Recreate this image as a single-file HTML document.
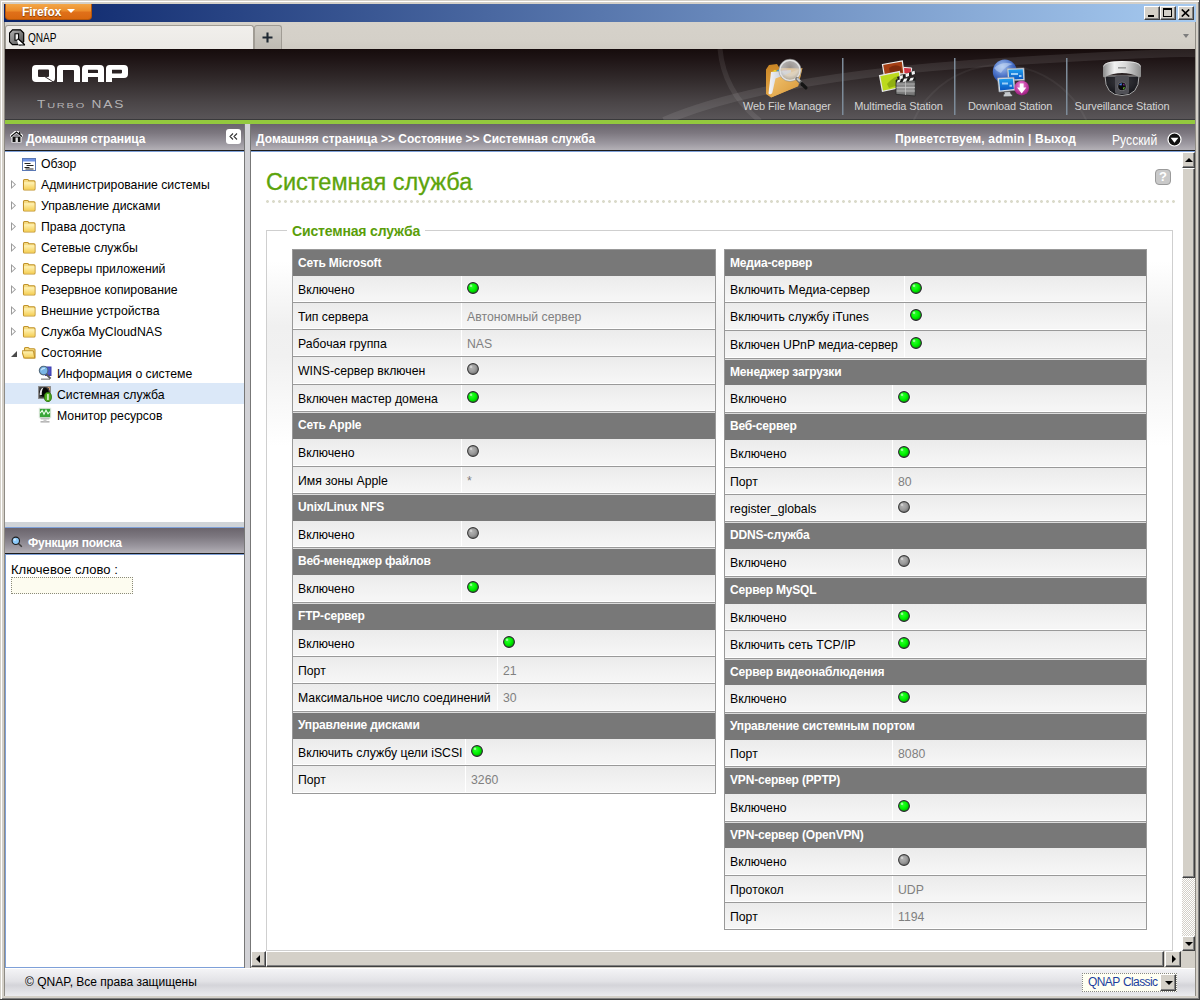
<!DOCTYPE html>
<html lang="ru">
<head>
<meta charset="utf-8">
<title>QNAP</title>
<style>
*{box-sizing:border-box;margin:0;padding:0}
html,body{width:1200px;height:1000px;overflow:hidden}
body{position:relative;background:#d4d0c8;font-family:"Liberation Sans",sans-serif;font-size:12px;color:#000}
.abs{position:absolute}
/* window frame */
#frame{left:0;top:0;width:1200px;height:1000px;background:#d4d0c8;border:1px solid #d4d0c8;box-shadow:inset 1px 1px 0 #fff,inset -1px -1px 0 #808080}
#frameR{left:1199px;top:0;width:1px;height:1000px;background:#404040}
#frameB{left:0;top:999px;width:1200px;height:1px;background:#404040}
#titlebar{left:4px;top:4px;width:1192px;height:18px;background:linear-gradient(90deg,#0a246a 0%,#a6caf0 100%)}
#ffbtn{left:5px;top:4px;width:87px;height:16px;border-radius:0 0 4px 4px;background:linear-gradient(180deg,#f3a748 0%,#ec8d2b 45%,#e0701a 55%,#d9680f 100%);border:1px solid #b4560c;border-top:none;color:#fff;font-weight:bold;font-size:12px;line-height:16px;padding-left:16px;letter-spacing:-0.1px;text-shadow:0 1px 1px rgba(90,40,0,.7)}
#ffbtn i{position:absolute;left:61px;top:5px;width:0;height:0;border-left:4px solid transparent;border-right:4px solid transparent;border-top:4.5px solid #fff}
.wbtn{top:6px;width:16px;height:14px;background:#d4d0c8;border:1px solid;border-color:#fff #404040 #404040 #fff;box-shadow:inset -1px -1px 0 #808080}
#tabbar{left:4px;top:22px;width:1192px;height:27px;background:linear-gradient(180deg,#d6d2ca 0%,#d4d0c8 70%,#cfcbc3 100%)}
#tab{left:5px;top:25px;width:249px;height:24px;background:linear-gradient(180deg,#f1efec 0%,#ebe9e5 100%);border:1px solid #a09c94;border-bottom:none;border-radius:3px 3px 0 0}
#tab span{position:absolute;left:22px;top:5px;font-size:12px;color:#000;transform-origin:0 0;transform:scaleX(.84)}
#newtab{left:254px;top:25px;width:28px;height:24px;background:linear-gradient(180deg,#cdcac3 0%,#bfbbb3 100%);border:1px solid #a09c94;border-bottom:none;border-radius:3px 3px 0 0}
/* page */
#page{left:5px;top:49px;width:1190px;height:947px;background:#fff;overflow:hidden}
#qhead{left:0;top:0;width:1190px;height:71px;background:linear-gradient(180deg,#160c0c 0%,#1f1516 15%,#332c2d 45%,#4a4547 75%,#5a5659 100%)}
#gline{left:0;top:70px;width:1190px;height:5px;background:#93c83e;border-top:1px solid #3a3a3c}
.phead{top:75px;height:27px;background:linear-gradient(180deg,#6a646c 0%,#7d7880 35%,#9c98a0 75%,#b4b1b7 100%);border-bottom:1px solid #1c1c1c;color:#fff;font-weight:bold;font-size:12px}
.ti{position:relative;height:21px;line-height:21px;white-space:nowrap;font-size:12.25px}
.ti .ic{position:absolute;left:17px;top:6px;width:14px;height:13px}
.ti span{position:absolute;left:36px;top:2px}
.ti .ar{position:absolute;left:6px;top:7px;width:5px;height:9px;background:#9a9a9a;clip-path:polygon(0 0,100% 50%,0 100%)}
.ti .ar:after{content:"";position:absolute;left:1px;top:2px;width:2.7px;height:5px;background:#fff;clip-path:polygon(0 0,100% 50%,0 100%)}
.ti .ao{position:absolute;left:6px;top:10px;width:6px;height:6px;background:#4a4a4a;clip-path:polygon(100% 0,100% 100%,0 100%)}
.ti .ic.fo{top:5px}
.ti.sub .ic{left:33px;top:3px;width:15px;height:16px}
.ti.sub span{left:52px}
.ti.sel{background:#dbe8f8}
.tb{border-left:1px solid #999;border-right:1px solid #999;background:#f3f3f3}
.tb .sh{position:absolute;left:0;right:0;background:#787878;border-top:1px solid #999;color:#fff;font-weight:bold;font-size:12px}
.tb .sh~.sh{border-top:1px solid #dcdcdc}
.tb .sh~.sh span{top:5px}
.tb .sh span{position:absolute;left:5px;top:6px;white-space:nowrap;letter-spacing:-0.18px;line-height:14px}

.tb .r{position:absolute;left:0;right:0;background:linear-gradient(180deg,#ebebeb 0%,#f0f0f0 40%,#f5f5f5 85%);border-bottom:1px solid #999;font-size:12.25px}
.tb .r:after{content:"";position:absolute;left:0;right:0;bottom:0;height:1px;background:#fff}
.tb .r>span{position:absolute;left:5px;top:7px;white-space:nowrap;line-height:14px}
.tb .r>i{position:absolute;top:0;bottom:0;width:1px;background:#fff;z-index:1}
.tb .r .v{position:absolute;top:0;bottom:0;right:0}
.tb .r .v em{position:absolute;left:5px;top:7px;font-style:normal;color:#808080;white-space:nowrap;line-height:14px}
.led{position:absolute;left:4px;top:5px;width:14px;height:14px}
.sbtn{background:#d4d0c8;border:1px solid;border-color:#fff #404040 #404040 #fff;box-shadow:inset -1px -1px 0 #808080}
.sbtn i{position:absolute;width:0;height:0}
.tu{left:2px;top:5px;border-left:4px solid transparent;border-right:4px solid transparent;border-bottom:4px solid #000}
.td{left:2px;top:5px;border-left:4px solid transparent;border-right:4px solid transparent;border-top:4px solid #000}
.tl{left:4px;top:3px;border-top:4px solid transparent;border-bottom:4px solid transparent;border-right:4px solid #000}
.tr{left:6px;top:3px;border-top:4px solid transparent;border-bottom:4px solid transparent;border-left:4px solid #000}
.hl{letter-spacing:-0.12px;font-size:11px;color:#d4d4d4;white-space:nowrap;text-align:center;line-height:13px}
</style>
</head>
<body>
<div id="frame" class="abs"></div>
<div id="frameR" class="abs"></div>
<div id="frameB" class="abs"></div>
<div id="titlebar" class="abs"></div>
<div id="ffbtn" class="abs">Firefox<i></i></div>
<div class="abs wbtn" style="left:1144px"><i class="abs" style="left:3px;top:8px;width:6px;height:2px;background:#000"></i></div>
<div class="abs wbtn" style="left:1160px"><i class="abs" style="left:2px;top:1px;width:9px;height:9px;border:1px solid #000;border-top-width:2px"></i></div>
<div class="abs wbtn" style="left:1178px"><svg class="abs" style="left:2px;top:2px" width="9" height="8" viewBox="0 0 9 8"><path d="M.8 .5 L8.2 7.5 M8.2 .5 L.8 7.5" stroke="#000" stroke-width="1.7"/></svg></div>
<div id="tabbar" class="abs"></div>
<div id="tab" class="abs"><svg class="abs" style="left:3px;top:3px" width="17" height="17" viewBox="0 0 17 17"><defs><linearGradient id="fv" x1="0" y1="0" x2="1" y2="1"><stop offset="0" stop-color="#b8b8b8"/><stop offset=".5" stop-color="#808080"/><stop offset="1" stop-color="#484848"/></linearGradient></defs><path d="M3.5 .8 H11.5 L14.7 4 V12.6 L11.6 15.7 H3.5 L.5 12.7 V4Z" fill="url(#fv)" stroke="#000" stroke-width="1.2"/><path d="M6 4.8 H9.6 V9.6 L7.6 11.2 H6Z" fill="#f4f4f4" stroke="#000" stroke-width="1.1"/><path d="M9 10 L15.8 16 H9.6 L8.2 12Z" fill="#fff"/><path d="M9.4 10 L15.8 15.8 M9.8 16 H16" stroke="#000" stroke-width="1.2" fill="none"/></svg><span>QNAP</span></div>
<div id="newtab" class="abs"><svg class="abs" style="left:7px;top:6px" width="11" height="11" viewBox="0 0 11 11"><path d="M5.5 .5 V10.5 M.5 5.5 H10.5" stroke="#1e2832" stroke-width="2.1"/></svg></div><i class="abs" style="left:1183px;top:34px;width:0;height:0;border-left:3.5px solid transparent;border-right:3.5px solid transparent;border-top:4px solid #7d7d7d"></i>
<svg width="0" height="0" style="position:absolute"><defs>
<linearGradient id="fg" x1="0" y1="0" x2="0" y2="1"><stop offset="0" stop-color="#fff3b8"/><stop offset="1" stop-color="#f5cf55"/></linearGradient>
<radialGradient id="lg" cx="0.4" cy="0.38" r="0.7"><stop offset="0" stop-color="#30ff30"/><stop offset="0.5" stop-color="#00f400"/><stop offset="1" stop-color="#009800"/></radialGradient>
<radialGradient id="lx" cx="0.4" cy="0.38" r="0.7"><stop offset="0" stop-color="#b4b4b4"/><stop offset="0.5" stop-color="#9c9c9c"/><stop offset="1" stop-color="#6a6a6a"/></radialGradient>
<symbol id="fold" viewBox="0 0 14 13"><path d="M1.5 2.5 Q1.5 1.5 2.5 1.5 H5.5 Q6.5 1.5 6.8 2.8 H12 Q13 2.8 13 3.8 V11 Q13 12 12 12 H2.5 Q1.5 12 1.5 11Z" fill="#f7dc82" stroke="#c0922a" stroke-width="1.1"/><rect x="2" y="4.3" width="10.5" height="7.2" fill="url(#fg)"/></symbol>
<symbol id="foldo" viewBox="0 0 14 13"><path d="M2.5 2.5 Q2.5 1.5 3.5 1.5 H6 Q7 1.5 7.3 2.8 H12 Q13 2.8 13 3.8 V11 Q13 12 12 12 H3.5 Q2.5 12 2.5 11Z" fill="#f7dc82" stroke="#c0922a" stroke-width="1.1"/><path d="M0 5.6 Q0 4.8 1 4.8 H10.6 Q11.4 4.8 11.6 5.6 L12.8 12 H2Z" fill="url(#fg)" stroke="#c0922a" stroke-width="1.1"/></symbol>
<symbol id="ledg" viewBox="0 0 14 14"><circle cx="7" cy="7" r="6.6" fill="#fff" opacity=".75"/><circle cx="7" cy="7" r="5.4" fill="url(#lg)" stroke="#2c2430" stroke-width="1.1"/><circle cx="5" cy="4.8" r="1.3" fill="#b8ffb8" opacity=".8"/></symbol>
<symbol id="ledx" viewBox="0 0 14 14"><circle cx="7" cy="7" r="6.6" fill="#fff" opacity=".75"/><circle cx="7" cy="7" r="5.4" fill="url(#lx)" stroke="#3a3a3a" stroke-width="1.1"/><circle cx="5" cy="4.8" r="1.3" fill="#e0e0e0" opacity=".7"/></symbol>
</defs></svg>
<div id="page" class="abs">
<div id="qhead" class="abs"></div>
<div id="gline" class="abs"></div>
<!--HEADER-->
<svg class="abs" style="left:0;top:0" width="1190" height="71" viewBox="5 49 1190 71">
<defs>
<linearGradient id="wf1" x1="0" y1="0" x2="1" y2="1"><stop offset="0" stop-color="#f3c877"/><stop offset="1" stop-color="#d79433"/></linearGradient>
<linearGradient id="wf2" x1="0" y1="0" x2="0" y2="1"><stop offset="0" stop-color="#c98524"/><stop offset="1" stop-color="#e4a84a"/></linearGradient>
<linearGradient id="pap" x1="0" y1="0" x2="1" y2="0"><stop offset="0" stop-color="#f4f6fa"/><stop offset="1" stop-color="#aeb4c0"/></linearGradient>
<radialGradient id="lens" cx=".5" cy=".35" r=".7"><stop offset="0" stop-color="#f2eee6" stop-opacity=".55"/><stop offset=".6" stop-color="#d8d8d8" stop-opacity=".8"/><stop offset="1" stop-color="#9a9a9a" stop-opacity=".85"/></radialGradient>
<linearGradient id="clap" x1="0" y1="0" x2="0" y2="1"><stop offset="0" stop-color="#5c5c5c"/><stop offset=".5" stop-color="#9a9a9a"/><stop offset="1" stop-color="#6a6a6a"/></linearGradient>
<radialGradient id="globe" cx=".4" cy=".3" r=".8"><stop offset="0" stop-color="#a9c4ee"/><stop offset=".5" stop-color="#4a72c8"/><stop offset="1" stop-color="#12308a"/></radialGradient>
<linearGradient id="scr" x1="0" y1="0" x2="0" y2="1"><stop offset="0" stop-color="#1f9ff0"/><stop offset="1" stop-color="#0a55c0"/></linearGradient>
<radialGradient id="mag" cx=".45" cy=".35" r=".7"><stop offset="0" stop-color="#f090d8"/><stop offset=".6" stop-color="#c03aa0"/><stop offset="1" stop-color="#8a1870"/></radialGradient>
<linearGradient id="silv" x1="0" y1="0" x2="1" y2="0"><stop offset="0" stop-color="#8a8a8a"/><stop offset=".3" stop-color="#f2f2f2"/><stop offset=".6" stop-color="#d8d8d8"/><stop offset="1" stop-color="#8c8c8c"/></linearGradient>
<radialGradient id="dome" cx=".5" cy=".3" r=".8"><stop offset="0" stop-color="#3a3a40"/><stop offset="1" stop-color="#0c0c10"/></radialGradient>
</defs>
<!-- swooshes -->
<path d="M664 121 Q770 76 1000 62 T1195 56" stroke="#fff" stroke-opacity=".09" stroke-width="8" fill="none"/>
<path d="M720 49 Q724 92 760 121" stroke="#fff" stroke-opacity=".08" stroke-width="5" fill="none"/>
<circle cx="1000" cy="160" r="95" stroke="#fff" stroke-opacity=".05" stroke-width="2" fill="none"/>
<!-- QNAP logo -->
<g transform="translate(32,65)" fill="#fff">
<path fill-rule="evenodd" d="M4 0 H19 Q23 0 23 4 V13 Q23 17 19 17 H4 Q0 17 0 13 V4 Q0 0 4 0Z M7 4.5 Q6 4.5 6 5.5 V11 Q6 12 7 12 H16 Q17 12 17 11 V5.5 Q17 4.5 16 4.5Z"/>
<path d="M11.5 10.8 L22 17.4" stroke="#3a3234" stroke-width="1" fill="none"/>
<path transform="translate(25,0)" d="M0 17 V3.5 Q0 0 3.5 0 H19 Q23 0 23 4 V17 H17 V5.8 Q17 5 16.2 5 H6 V17Z"/>
<path transform="translate(50,0)" fill-rule="evenodd" d="M0 17 V4 Q0 0 4 0 H18 Q22 0 22 4 V17 H16 V12 H6 V17Z M6 4.8 V8 H16 V5.6 Q16 4.8 15.2 4.8Z"/>
<path transform="translate(74,0)" fill-rule="evenodd" d="M0 17 V3.5 Q0 0 3.5 0 H18 Q22 0 22 4 V9 Q22 13 18 13 H6 V17Z M6 4.8 V8.4 H15.2 Q16 8.4 16 7.6 V5.6 Q16 4.8 15.2 4.8Z"/>
</g>
<!-- separators -->
<rect x="842" y="58" width="1.5" height="57" fill="#7d8b99"/>
<rect x="954" y="58" width="1.5" height="57" fill="#7d8b99"/>
<rect x="1066" y="58" width="1.5" height="57" fill="#7d8b99"/>
<!-- web file manager -->
<g transform="translate(755,54)">
<path d="M11 15.5 L14 11 L22 10 L24.5 14 L47 14.5 L43 32 L16 43.5 L11 40Z" fill="url(#wf2)"/>
<path d="M16 18 L23.5 17.2 L36 16 L36 30 L15 40.5 L13.5 39.5Z" fill="url(#pap)"/>
<path d="M17 17.8 L20 15.8 L22 17.3Z" fill="#f0e020"/><path d="M21 17.3 L23.5 15.6 L25.5 17Z" fill="#20a0e0"/><path d="M27 16.6 L31 15.4 L32 16.4Z" fill="#b070d0"/>
<path d="M20.5 24.5 L47.5 14 L43.2 32.2 L16.2 43.6Z" fill="url(#wf1)"/>
<circle cx="35" cy="16.3" r="10" fill="url(#lens)"/>
<circle cx="35" cy="16.3" r="10.2" fill="none" stroke="#e2e2e2" stroke-width="1.7"/>
<circle cx="35" cy="16.3" r="11.2" fill="none" stroke="#8a8a8a" stroke-width=".5"/>
<path d="M42 24.8 L50.5 33.5" stroke="#6a6a6a" stroke-width="3.4" stroke-linecap="round"/>
<path d="M47 30 L50.8 33.8" stroke="#141414" stroke-width="3.6" stroke-linecap="round"/>
<path d="M42 24.2 L45 27.2" stroke="#c8c8c8" stroke-width="2.2"/>
</g>
<!-- multimedia -->
<g transform="translate(865,54)">
<path d="M17.5 10.5 L37.3 7 L39 19.6 L19.3 21Z" fill="#a53f14" stroke="#eee" stroke-width="1.2"/>
<path d="M24 14 Q30 9 36 13 L37 18 L25 19.5Z" fill="#6e2408" opacity=".7"/>
<path d="M38.5 13.4 L46.7 14 L46 19.8 L39 19.8Z" fill="#d23444" stroke="#eee" stroke-width="1"/>
<path d="M14.6 21.6 L34.4 17.5 L36.2 33.3 L17.5 37.3Z" fill="#bcd91c" stroke="#e8e8e8" stroke-width="1.3"/>
<path d="M22 30 Q27 24 33 22 L34 31 L24 34Z" fill="#7a9a0a" opacity=".65"/>
<path d="M31 26 L50.2 26 L50.2 42 L31 40.3Z" fill="url(#clap)" stroke="#2a2a2a" stroke-width=".8"/>
<path d="M31.5 30 H50 M31.5 33.5 H50 M31.5 37 H50 M40.5 27 V41" stroke="#d0d0d0" stroke-width=".8" opacity=".8"/>
<path d="M31 25.8 L50.5 23.2 L50.5 26.3 L31 28.8Z" fill="#1a1a1a"/>
<path d="M33 25.6 L36 25.2 L34.5 28.3 L31.6 28.7Z M39 24.8 L42.5 24.3 L41 27.5 L37.6 27.9Z M45.5 23.9 L49 23.4 L47.6 26.6 L44 27.1Z" fill="#f4f4f4"/>
<path d="M32 23 L50 16.5 L51 19.6 L33 26Z" fill="#1a1a1a"/>
<path d="M34.5 22.1 L37.8 20.9 L37.8 24.3 L34.6 25.4Z M40.5 19.9 L44 18.7 L44 22 L40.8 23.2Z M46.5 17.8 L49.6 16.7 L50 19.9 L46.9 21Z" fill="#f4f4f4"/>
</g>
<!-- download -->
<g transform="translate(975,54)">
<circle cx="29.8" cy="17.5" r="12" fill="url(#globe)"/>
<path d="M19 14 Q27 7 38 10 Q30 12 26 19 Q22 18 19 14Z" fill="#c8daf4" opacity=".55"/>
<path d="M32 14.6 L49 14 L49.6 26.3 L33.3 26.8Z" fill="#d8dde2" stroke="#8e98a4" stroke-width=".6"/>
<path d="M33.4 15.8 L47.8 15.3 L48.3 25.1 L34.4 25.6Z" fill="url(#scr)"/>
<path d="M36 20 H43 M44 22 H46.5" stroke="#bfe4ff" stroke-width="2" opacity=".8"/>
<path d="M22.5 24 L39 23.3 L40.3 36.2 L24 38Z" fill="#dfe3e8" stroke="#8e98a4" stroke-width=".6"/>
<path d="M24 25.2 L37.8 24.6 L38.9 35 L25.2 36.5Z" fill="url(#scr)"/>
<path d="M27 29.5 H33 M34.5 31.7 H37" stroke="#bfe4ff" stroke-width="2" opacity=".8"/>
<path d="M29 38 L35 37.5 L36 40 L37.5 41 L37 42.6 L28.5 42.8 L28.2 41 L29.5 40Z" fill="#c4c8cc" stroke="#333" stroke-width=".5"/>
<circle cx="46.7" cy="34.1" r="7.4" fill="url(#mag)"/>
<path d="M44.8 29.5 H48.6 V33.5 H51.3 L46.7 39.5 L42.1 33.5 H44.8Z" fill="#fff"/>
</g>
<!-- surveillance -->
<g transform="translate(1087,54)">
<path d="M18 22 Q18 41.5 35 41.5 Q52 41.5 52 22Z" fill="url(#dome)" stroke="#a8a8a8" stroke-width="1"/>
<rect x="28" y="21.6" width="14" height="18.5" rx="2.5" fill="#505056"/>
<circle cx="35" cy="32.4" r="4.6" fill="#77777c"/>
<circle cx="35" cy="32.4" r="3.8" fill="#0a0a0c"/>
<path d="M32 31 Q33 29 35 29.4 L34.5 31.5Z" fill="#4a7ad8"/><path d="M36 29.5 Q37.5 30 38 31.3 L36.3 31.5Z" fill="#8a2a9a"/><path d="M38 33 Q37.6 35 36 35.7 L36 33.4Z" fill="#5aa82a"/>
<path d="M16 13 Q16 7 35 7 Q54 7 54 13 V22 Q54 24 52 23 Q44 19 35 19 Q26 19 18 23 Q16 24 16 22Z" fill="url(#silv)"/>
<path d="M16.5 12.5 Q17 7.5 35 7.5 Q53 7.5 53.5 12.5" stroke="#fff" stroke-width=".8" fill="none" opacity=".7"/>
<rect x="31" y="13" width="8" height="1.6" fill="#9a9a9a"/>
</g>
</svg>
<div class="abs hl" style="left:738px;top:51px;width:87px">Web File Manager</div>
<div class="abs hl" style="left:848px;top:51px;width:91px">Multimedia Station</div>
<div class="abs hl" style="left:963px;top:51px;width:84px">Download Station</div>
<div class="abs hl" style="left:1069px;top:51px;width:96px">Surveillance Station</div>
<div class="abs" style="left:32px;top:51px;white-space:nowrap;color:#b4b2b4;font-size:10px;line-height:10px;letter-spacing:1.3px;transform-origin:0 0;transform:scaleX(1.37)">T<span style="font-size:8px">URBO</span>&nbsp;NAS</div>
<!--/HEADER-->
<div id="lhead" class="abs phead" style="left:0;width:239px"><svg class="abs" style="left:5px;top:7px" width="13" height="12" viewBox="0 0 13 12"><path d="M0.5 5.5 L6.5 0.5 L12.5 5.5 M9.5 1 V3" stroke="#fff" stroke-width="3" fill="none"/><rect x="1.5" y="5" width="10" height="6.5" fill="#fff"/><path d="M1 5.5 L6.5 1 L12 5.5" stroke="#111" stroke-width="1.3" fill="none"/><rect x="2.5" y="5.5" width="8" height="5.5" fill="#111"/><rect x="5.5" y="6.5" width="2.4" height="4.5" fill="#ddd"/><rect x="9" y="1" width="1.5" height="2.5" fill="#111"/></svg><span class="abs" style="left:21px;top:8px;letter-spacing:-0.12px">Домашняя страница</span><div class="abs" style="left:221px;top:5px;width:15px;height:15px;background:#fff;border-radius:3px"><svg width="15" height="15" viewBox="0 0 15 15"><path d="M7 4.5 L4 7.5 L7 10.5 M11 4.5 L8 7.5 L11 10.5" stroke="#333" stroke-width="1.1" fill="none"/></svg></div></div>
<div class="abs" style="left:0;top:102px;width:239px;height:1px;background:#7ea0d8"></div>
<div id="tree" class="abs" style="left:0;top:103px;width:239px;height:370px;background:#fff">
<div class="ti"><svg class="ic" width="14" height="13" viewBox="0 0 14 13"><rect x=".5" y=".5" width="13" height="12" fill="#fff" stroke="#5a78b4"/><rect x="1" y="1" width="12" height="2.5" fill="#6f93e6"/><path d="M2.5 5.5h6M4.5 7.5h7M2.5 9.5h5M3.5 11h8" stroke="#222" stroke-width="1"/></svg><span>Обзор</span></div>
<div class="ti"><i class="ar"></i><svg class="ic fo"><use href="#fold"/></svg><span>Администрирование системы</span></div>
<div class="ti"><i class="ar"></i><svg class="ic fo"><use href="#fold"/></svg><span>Управление дисками</span></div>
<div class="ti"><i class="ar"></i><svg class="ic fo"><use href="#fold"/></svg><span>Права доступа</span></div>
<div class="ti"><i class="ar"></i><svg class="ic fo"><use href="#fold"/></svg><span>Сетевые службы</span></div>
<div class="ti"><i class="ar"></i><svg class="ic fo"><use href="#fold"/></svg><span>Серверы приложений</span></div>
<div class="ti"><i class="ar"></i><svg class="ic fo"><use href="#fold"/></svg><span>Резервное копирование</span></div>
<div class="ti"><i class="ar"></i><svg class="ic fo"><use href="#fold"/></svg><span>Внешние устройства</span></div>
<div class="ti"><i class="ar"></i><svg class="ic fo"><use href="#fold"/></svg><span>Служба MyCloudNAS</span></div>
<div class="ti"><i class="ao"></i><svg class="ic fo"><use href="#foldo"/></svg><span>Состояние</span></div>
<div class="ti sub"><svg class="ic" width="15" height="16" viewBox="0 0 15 16"><rect x="7" y="1.5" width="6.5" height="9.5" fill="#3a3cae"/><rect x="8" y="2.5" width="4.5" height="7" fill="#5058c8"/><path d="M3 14.2 H12" stroke="#9a9a9a" stroke-width="1.6"/><path d="M7.8 8.8 L12.6 13.6" stroke="#5a5a5a" stroke-width="2"/><circle cx="5.6" cy="5.6" r="4.3" fill="#79b6e6" stroke="#50687c" stroke-width="1.1"/><path d="M3.2 5.2 Q4.5 2.8 7 3.4" stroke="#c4e4fa" stroke-width="1.2" fill="none"/></svg><span>Информация о системе</span></div>
<div class="ti sub sel"><svg class="ic" width="15" height="16" viewBox="0 0 15 16"><rect x=".6" y=".6" width="11.8" height="11.8" fill="#3c3c3c" stroke="#8a8a8a" stroke-width="1.1"/><circle cx="6" cy="6.2" r="4.6" fill="#050505"/><path d="M1.8 9 C1.6 4.5 3.2 2 5.6 1.6 C4.2 3.4 3.6 6 3.8 9Z" fill="#e8e8e8"/><path d="M9.6 1.6 H11.6 V4.4" stroke="#d8a070" stroke-width="1" fill="none"/><ellipse cx="9.9" cy="11" rx="3.5" ry="4.6" fill="#4fae1e" stroke="#2c6e0c" stroke-width=".9"/><rect x="9.3" y="8" width="1.3" height="6" rx=".6" fill="#fff"/></svg><span>Системная служба</span></div>
<div class="ti sub"><svg class="ic" width="15" height="16" viewBox="0 0 15 16"><rect x="1.3" y="1.3" width="11.4" height="9.4" fill="#38a638" stroke="#dfe6df" stroke-width="1"/><path d="M2 6.2 L4.2 3.6 L6 7.2 L8 3.2 L10 6.8 L12 4.6" stroke="#eaffea" stroke-width="1.1" fill="none"/><path d="M2 10.8 H12 L11 12.6 H3Z" fill="#c2c6c2"/><path d="M2.5 14.8 H11.5" stroke="#b4b4b4" stroke-width="1.6"/><rect x="5.5" y="12.5" width="3" height="2" fill="#c8c8c8"/></svg><span>Монитор ресурсов</span></div>
</div>
<div class="abs" style="left:0;top:473px;width:239px;height:6px;background:#d0d4d8"></div>
<div class="abs" style="left:0;top:478px;width:239px;height:1px;background:#7ea0d8"></div>
<div id="shead" class="abs phead" style="left:0;top:479px;width:239px;height:26px"><svg class="abs" style="left:6px;top:8px" width="12" height="12" viewBox="0 0 12 12"><path d="M7.2 7.2 L10.8 10.8" stroke="#3a3a3a" stroke-width="1.5"/><circle cx="4.8" cy="4.8" r="3.7" fill="#8ccafa" stroke="#1c1c1c" stroke-width="1.1"/><circle cx="3.8" cy="3.6" r="1.2" fill="#d4ecff"/></svg><span class="abs" style="left:23px;top:8px;letter-spacing:-0.2px">Функция поиска</span></div>
<div class="abs" style="left:0;top:505px;width:239px;height:1px;background:#7ea0d8"></div>
<div class="abs" style="left:0;top:506px;width:1px;height:413px;background:#7ea0d8"></div>
<div class="abs" style="left:6px;top:513px;font-size:13px;letter-spacing:.05px">Ключевое слово :</div>
<div class="abs" style="left:6px;top:528px;width:122px;height:17px;background:#fdfcf0;border:1px dotted #8a8a7a"></div>
<div class="abs" style="left:0;top:918px;width:239px;height:1px;background:#7ea0d8"></div>
<!-- splitter -->
<div class="abs" style="left:239px;top:75px;width:7px;height:844px;background:#d2d2d6;border-left:1px solid #777;border-right:1px solid #777"></div>

<div id="rhead" class="abs phead" style="left:246px;width:944px"><span class="abs" style="left:5px;top:8px;letter-spacing:0.02px">Домашняя страница &gt;&gt; Состояние &gt;&gt; Системная служба</span><span class="abs" style="left:644px;top:8px;letter-spacing:0.17px">Приветствуем, admin | Выход</span><span class="abs" style="left:861px;top:8.5px;font-weight:normal;font-size:14px;transform-origin:0 0;transform:scaleX(.87);line-height:15px">Русский</span><svg class="abs" style="left:916px;top:7.5px" width="15" height="15" viewBox="0 0 15 15"><circle cx="7.5" cy="7.5" r="6.5" fill="#111" stroke="#fff" stroke-width="1.2"/><path d="M3.6 5.8 H11.4 L7.5 10.8Z" fill="#fff"/></svg></div>
<div class="abs" style="left:246px;top:102px;width:944px;height:1px;background:#7ea0d8"></div>
<div id="rbody" class="abs" style="left:246px;top:103px;width:931px;height:799px;background:#fff;overflow:hidden"></div>
<div class="abs" style="left:261px;top:119px;font-size:23.5px;color:#5ca40c;-webkit-text-stroke:0.3px #5ca40c;line-height:28px;white-space:nowrap">Системная служба</div>
<div class="abs" style="left:261px;top:151px;width:909px;height:3px;background-image:radial-gradient(circle at 1.5px 1.5px,#dadaca 1.1px,rgba(218,218,202,0) 1.7px);background-size:6px 3px"></div>
<div class="abs" style="left:1150px;top:120px;width:16px;height:16px;background:#c9c9c9;border:1px solid #9a9a9a;border-radius:4px;color:#fff;font-weight:bold;font-size:13px;line-height:14px;text-align:center">?</div>
<div class="abs" style="left:261px;top:181px;width:907px;height:721px;border:1px solid #cfcfcf;background:linear-gradient(180deg,#fff 30px,#f0f0f0 95px,#f1f1f1 125px,#fff 215px)"></div>
<div class="abs" style="left:282px;top:173px;background:#fff;padding:0 5px;font-size:14px;font-weight:bold;color:#5a9e0a;letter-spacing:-0.15px;line-height:18px;white-space:nowrap">Системная служба</div>
<!--TABLES-->
<div class="tb abs" style="left:287px;top:200px;width:424px;height:545px">
<div class="sh" style="top:0px;height:27px"><span>Сеть Microsoft</span></div>
<div class="r" style="top:27px;height:27px"><span>Включено</span><i style="left:168px"></i><div class="v" style="left:169px"><svg class="led"><use href="#ledg"/></svg></div></div>
<div class="r" style="top:54px;height:27px"><span>Тип сервера</span><i style="left:168px"></i><div class="v" style="left:169px"><em>Автономный сервер</em></div></div>
<div class="r" style="top:81px;height:27px"><span>Рабочая группа</span><i style="left:168px"></i><div class="v" style="left:169px"><em>NAS</em></div></div>
<div class="r" style="top:108px;height:28px"><span>WINS-сервер включен</span><i style="left:168px"></i><div class="v" style="left:169px"><svg class="led"><use href="#ledx"/></svg></div></div>
<div class="r" style="top:136px;height:27px"><span>Включен мастер домена</span><i style="left:168px"></i><div class="v" style="left:169px"><svg class="led"><use href="#ledg"/></svg></div></div>
<div class="sh" style="top:163px;height:27px"><span>Сеть Apple</span></div>
<div class="r" style="top:190px;height:28px"><span>Включено</span><i style="left:168px"></i><div class="v" style="left:169px"><svg class="led"><use href="#ledx"/></svg></div></div>
<div class="r" style="top:218px;height:27px"><span>Имя зоны Apple</span><i style="left:168px"></i><div class="v" style="left:169px"><em>*</em></div></div>
<div class="sh" style="top:245px;height:27px"><span>Unix/Linux NFS</span></div>
<div class="r" style="top:272px;height:27px"><span>Включено</span><i style="left:168px"></i><div class="v" style="left:169px"><svg class="led"><use href="#ledx"/></svg></div></div>
<div class="sh" style="top:299px;height:27px"><span>Веб-менеджер файлов</span></div>
<div class="r" style="top:326px;height:28px"><span>Включено</span><i style="left:168px"></i><div class="v" style="left:169px"><svg class="led"><use href="#ledg"/></svg></div></div>
<div class="sh" style="top:354px;height:27px"><span>FTP-сервер</span></div>
<div class="r" style="top:381px;height:27px"><span>Включено</span><i style="left:204px"></i><div class="v" style="left:205px"><svg class="led"><use href="#ledg"/></svg></div></div>
<div class="r" style="top:408px;height:27px"><span>Порт</span><i style="left:204px"></i><div class="v" style="left:205px"><em>21</em></div></div>
<div class="r" style="top:435px;height:28px"><span>Максимальное число соединений</span><i style="left:204px"></i><div class="v" style="left:205px"><em>30</em></div></div>
<div class="sh" style="top:463px;height:27px"><span>Управление дисками</span></div>
<div class="r" style="top:490px;height:27px"><span>Включить службу цели iSCSI</span><i style="left:172px"></i><div class="v" style="left:173px"><svg class="led"><use href="#ledg"/></svg></div></div>
<div class="r" style="top:517px;height:28px"><span>Порт</span><i style="left:172px"></i><div class="v" style="left:173px"><em>3260</em></div></div>
</div>
<div class="tb abs" style="left:719px;top:200px;width:423px;height:681px">
<div class="sh" style="top:0px;height:27px"><span>Медиа-сервер</span></div>
<div class="r" style="top:27px;height:27px"><span>Включить Медиа-сервер</span><i style="left:179px"></i><div class="v" style="left:180px"><svg class="led"><use href="#ledg"/></svg></div></div>
<div class="r" style="top:54px;height:28px"><span>Включить службу iTunes</span><i style="left:179px"></i><div class="v" style="left:180px"><svg class="led"><use href="#ledg"/></svg></div></div>
<div class="r" style="top:82px;height:28px"><span>Включен UPnP медиа-сервер</span><i style="left:179px"></i><div class="v" style="left:180px"><svg class="led"><use href="#ledg"/></svg></div></div>
<div class="sh" style="top:110px;height:26px"><span>Менеджер загрузки</span></div>
<div class="r" style="top:136px;height:28px"><span>Включено</span><i style="left:167px"></i><div class="v" style="left:168px"><svg class="led"><use href="#ledg"/></svg></div></div>
<div class="sh" style="top:164px;height:27px"><span>Веб-сервер</span></div>
<div class="r" style="top:191px;height:28px"><span>Включено</span><i style="left:167px"></i><div class="v" style="left:168px"><svg class="led"><use href="#ledg"/></svg></div></div>
<div class="r" style="top:219px;height:27px"><span>Порт</span><i style="left:167px"></i><div class="v" style="left:168px"><em>80</em></div></div>
<div class="r" style="top:246px;height:27px"><span>register_globals</span><i style="left:167px"></i><div class="v" style="left:168px"><svg class="led"><use href="#ledx"/></svg></div></div>
<div class="sh" style="top:273px;height:27px"><span>DDNS-служба</span></div>
<div class="r" style="top:300px;height:28px"><span>Включено</span><i style="left:167px"></i><div class="v" style="left:168px"><svg class="led"><use href="#ledx"/></svg></div></div>
<div class="sh" style="top:328px;height:27px"><span>Сервер MySQL</span></div>
<div class="r" style="top:355px;height:27px"><span>Включено</span><i style="left:167px"></i><div class="v" style="left:168px"><svg class="led"><use href="#ledg"/></svg></div></div>
<div class="r" style="top:382px;height:28px"><span>Включить сеть TCP/IP</span><i style="left:167px"></i><div class="v" style="left:168px"><svg class="led"><use href="#ledg"/></svg></div></div>
<div class="sh" style="top:410px;height:26px"><span>Сервер видеонаблюдения</span></div>
<div class="r" style="top:436px;height:28px"><span>Включено</span><i style="left:167px"></i><div class="v" style="left:168px"><svg class="led"><use href="#ledg"/></svg></div></div>
<div class="sh" style="top:464px;height:27px"><span>Управление системным портом</span></div>
<div class="r" style="top:491px;height:27px"><span>Порт</span><i style="left:167px"></i><div class="v" style="left:168px"><em>8080</em></div></div>
<div class="sh" style="top:518px;height:27px"><span>VPN-сервер (PPTP)</span></div>
<div class="r" style="top:545px;height:28px"><span>Включено</span><i style="left:167px"></i><div class="v" style="left:168px"><svg class="led"><use href="#ledg"/></svg></div></div>
<div class="sh" style="top:573px;height:26px"><span>VPN-сервер (OpenVPN)</span></div>
<div class="r" style="top:599px;height:28px"><span>Включено</span><i style="left:167px"></i><div class="v" style="left:168px"><svg class="led"><use href="#ledx"/></svg></div></div>
<div class="r" style="top:627px;height:27px"><span>Протокол</span><i style="left:167px"></i><div class="v" style="left:168px"><em>UDP</em></div></div>
<div class="r" style="top:654px;height:27px"><span>Порт</span><i style="left:167px"></i><div class="v" style="left:168px"><em>1194</em></div></div>
</div>
<!--/TABLES-->
<!-- vertical scrollbar -->
<div class="abs" style="left:1177px;top:103px;width:13px;height:799px;background:#e9e7e2;background-image:conic-gradient(#d4d0c8 25%,#fff 0 50%,#d4d0c8 0 75%,#fff 0);background-size:2px 2px"></div>
<div class="abs sbtn" style="left:1177px;top:103px;width:13px;height:16px"><i class="tu"></i></div>
<div class="abs sbtn" style="left:1177px;top:119px;width:13px;height:710px"></div>
<div class="abs sbtn" style="left:1177px;top:887px;width:13px;height:15px"><i class="td"></i></div>
<!-- horizontal scrollbar -->
<div class="abs" style="left:246px;top:902px;width:944px;height:17px;background:#d4d0c8"></div>
<div class="abs sbtn" style="left:246px;top:902px;width:15px;height:16px"><i class="tl"></i></div>
<div class="abs sbtn" style="left:261px;top:902px;width:898px;height:16px"></div>
<div class="abs sbtn" style="left:1160px;top:902px;width:16px;height:16px"><i class="tr"></i></div>
<!-- footer -->
<div class="abs" style="left:0;top:919px;width:1190px;height:28px;background:linear-gradient(180deg,#f4f4f6 0%,#e2e2e6 45%,#d4d4d9 60%,#ececef 100%);border-top:1px solid #fff"></div>
<div class="abs" style="left:20px;top:926px;font-size:12px;white-space:nowrap">© QNAP, Все права защищены</div>
<div class="abs" style="left:1077px;top:924px;width:95px;height:19px;background:#fffff2;border:1px dotted #888"><span class="abs" style="left:5px;top:1px;font-size:12px;color:#1c3f9e;letter-spacing:-0.62px;white-space:nowrap;word-spacing:1px">QNAP Classic</span><div class="abs sbtn" style="left:77px;top:0;width:16px;height:17px"><i class="td" style="top:6px;left:4px"></i></div></div>

</div>
<div class="abs" style="left:4px;top:22px;width:1px;height:974px;background:#8e8b84"></div><div class="abs" style="left:1195px;top:22px;width:1px;height:974px;background:#8e8b84"></div>
</body>
</html>
